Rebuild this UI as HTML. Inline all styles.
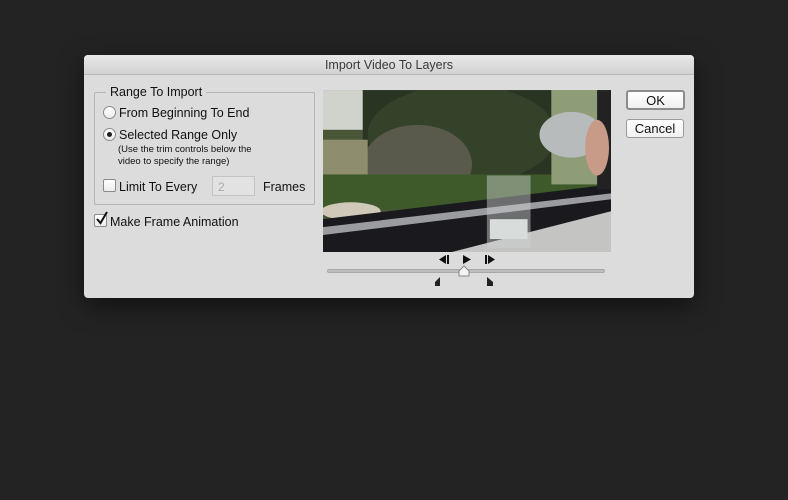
<!DOCTYPE html>
<html><head><meta charset="utf-8"><style>
*{margin:0;padding:0;box-sizing:border-box}
body{width:788px;height:500px;background:#232323;font-family:"Liberation Sans",sans-serif;position:relative;overflow:hidden;color:#111}
.dlg{position:absolute;left:84px;top:55px;width:610px;height:243px;background:#dcdcdc;border-radius:4px;box-shadow:0 8px 24px rgba(0,0,0,.5)}
.title{height:20px;background:linear-gradient(#e8e8e8,#d2d2d2);border-bottom:1px solid #b8b8b8;border-radius:4px 4px 0 0;text-align:center;font-size:12.5px;line-height:20px;color:#3a3a3a}
.abs{position:absolute;white-space:nowrap}
.grp{position:absolute;left:10px;top:37px;width:221px;height:113px;border:1px solid #b5b5b5;border-radius:2px}
.radio{position:absolute;width:13px;height:13px;border-radius:50%;border:1px solid #8a8a8a;background:linear-gradient(#fff,#ececec)}
.chk{position:absolute;width:13px;height:13px;border:1px solid #8a8a8a;border-radius:2px;background:linear-gradient(#fff,#ececec)}
.t{font-size:12.5px}
.btn{position:absolute;background:linear-gradient(#fff,#f0f0f0);border:1px solid #9a9a9a;border-radius:3px;font-size:13px;text-align:center}
</style></head><body>
<div class="dlg">
<div class="title">Import Video To Layers</div>
<div class="grp"></div>
<div class="abs t" style="left:22px;top:30px;background:#dcdcdc;padding:0 4px">Range To Import</div>
<div class="radio" style="left:19px;top:51px"></div>
<div class="abs t" style="left:35px;top:51px">From Beginning To End</div>
<div class="radio" style="left:19px;top:73px"><div style="position:absolute;left:3px;top:3px;width:5px;height:5px;border-radius:50%;background:#222"></div></div>
<div class="abs t" style="left:35px;top:73px">Selected Range Only</div>
<div class="abs" style="left:34px;top:89px;font-size:9.5px;line-height:12px">(Use the trim controls below the<br>video to specify the range)</div>
<div class="chk" style="left:19px;top:124px"></div>
<div class="abs t" style="left:35px;top:125px">Limit To Every</div>
<div class="abs" style="left:128px;top:121px;width:43px;height:20px;border:1px solid #c4c4c4;background:#e2e2e2;font-size:12px;color:#aaa;padding:3px 0 0 5px">2</div>
<div class="abs t" style="left:179px;top:125px">Frames</div>
<div class="chk" style="left:10px;top:159px"></div>
<svg class="abs" style="left:11px;top:155px" width="14" height="16"><path d="M2 9L5.5 13L12 2" fill="none" stroke="#111" stroke-width="2"/></svg>
<div class="abs t" style="left:26px;top:160px">Make Frame Animation</div>

<svg class="abs" style="left:239px;top:35px" width="288" height="162" viewBox="0 0 290 163">
<rect width="290" height="163" fill="#4a5638"/>
<rect x="0" y="0" width="290" height="40" fill="#cfd3cc"/>
<rect x="40" y="0" width="190" height="115" fill="#2a3422"/>
<ellipse cx="140" cy="45" rx="95" ry="50" fill="#34422a"/>
<ellipse cx="95" cy="75" rx="55" ry="40" fill="#5a5a4c"/>
<rect x="0" y="50" width="45" height="35" fill="#8e8e6e"/>
<rect x="0" y="85" width="290" height="35" fill="#3e5a2a"/>
<rect x="230" y="0" width="50" height="95" fill="#8f9c78"/>
<ellipse cx="28" cy="122" rx="30" ry="9" fill="#d0c8b8"/>
<polygon points="0,130 290,95 290,163 0,163" fill="#1a1a1e"/>
<polygon points="0,138 290,104 290,110 0,146" fill="#9a9ca0"/>
<polygon points="130,163 290,122 290,163" fill="#c4c4c2"/>
<rect x="276" y="0" width="14" height="100" fill="#222"/>
<rect x="165" y="86" width="44" height="73" fill="#cfd3d2" opacity=".45"/>
<rect x="168" y="130" width="38" height="20" fill="#d8dcdb"/>
<ellipse cx="250" cy="45" rx="32" ry="23" fill="#b8bbbb"/>
<ellipse cx="276" cy="58" rx="12" ry="28" fill="#c89a88"/>
</svg>

<svg class="abs" style="left:355px;top:200px" width="60" height="10">
<path d="M0 4.5L7 0V9Z" fill="#111"/><rect x="8" y="0" width="2" height="9" fill="#111"/>
<path d="M24 0L32 4.5L24 9Z" fill="#111"/>
<rect x="46" y="0" width="2" height="9" fill="#111"/><path d="M49 0L56 4.5L49 9Z" fill="#111"/>
</svg>
<div class="abs" style="left:243px;top:214px;width:278px;height:4px;border-radius:2px;background:#bdbdbd;border:1px solid #a8a8a8"></div>
<svg class="abs" style="left:374px;top:210px" width="12" height="12"><path d="M1 11V6L6 1L11 6V11Z" fill="#f4f4f4" stroke="#888"/></svg>
<svg class="abs" style="left:351px;top:222px" width="6" height="9"><path d="M5 0V9H0V5Z" fill="#222"/></svg>
<svg class="abs" style="left:403px;top:222px" width="6" height="9"><path d="M0 0V9H6V5Z" fill="#222"/></svg>

<div class="btn" style="left:542px;top:35px;width:59px;height:20px;line-height:17px;border:2px solid #8c8c8c">OK</div>
<div class="btn" style="left:542px;top:64px;width:58px;height:19px;line-height:17px">Cancel</div>
</div>
</body></html>
